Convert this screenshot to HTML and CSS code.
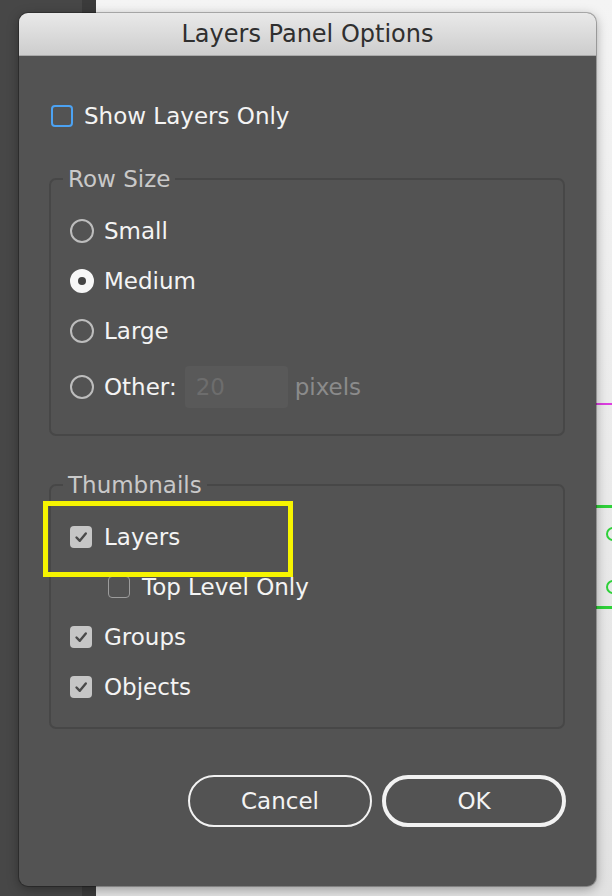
FILE: index.html
```html
<!DOCTYPE html>
<html>
<head>
<meta charset="utf-8">
<link rel="stylesheet" href="styles.css">
</head>
<body>
<div class="desktop">
  <div class="sidebar"></div>
  <div class="divider"></div>
  <div class="canvas">
    <span class="guide magenta g1"></span>
    <span class="guide green g2"></span>
    <span class="ring r1"></span>
    <span class="ring r2"></span>
    <span class="guide green g3"></span>
  </div>

  <div class="dialog">
    <div class="titlebar">Layers Panel Options</div>
    <div class="dialog-body">
      <div class="row top-option">
        <span class="checkbox focus"></span>
        <span class="label">Show Layers Only</span>
      </div>

      <fieldset class="group rowsize">
        <legend>Row Size</legend>
        <div class="row"><span class="radio"></span><span class="label">Small</span></div>
        <div class="row"><span class="radio selected"></span><span class="label">Medium</span></div>
        <div class="row"><span class="radio"></span><span class="label">Large</span></div>
        <div class="row other">
          <span class="radio"></span><span class="label">Other:</span>
          <span class="field">20</span>
          <span class="unit">pixels</span>
        </div>
      </fieldset>

      <fieldset class="group thumbs">
        <legend>Thumbnails</legend>
        <div class="row"><span class="checkbox checked"><svg viewBox="0 0 22 22"><path d="M6.5 11.5 L9.8 14.8 L15.8 7.5"/></svg></span><span class="label">Layers</span></div>
        <div class="row sub"><span class="checkbox plain"></span><span class="label">Top Level Only</span></div>
        <div class="row"><span class="checkbox checked"><svg viewBox="0 0 22 22"><path d="M6.5 11.5 L9.8 14.8 L15.8 7.5"/></svg></span><span class="label">Groups</span></div>
        <div class="row"><span class="checkbox checked"><svg viewBox="0 0 22 22"><path d="M6.5 11.5 L9.8 14.8 L15.8 7.5"/></svg></span><span class="label">Objects</span></div>
      </fieldset>

      <div class="buttons">
        <button class="btn">Cancel</button>
        <button class="btn default">OK</button>
      </div>
    </div>
    <div class="highlight"></div>
  </div>
</div>
</body>
</html>
```

FILE: styles.css
```css
* { box-sizing: border-box; }
html, body { margin: 0; padding: 0; }
body {
  width: 612px;
  height: 896px;
  overflow: hidden;
  font-family: "DejaVu Sans", "Liberation Sans", sans-serif;
}
.desktop {
  position: relative;
  display: flex;
  width: 612px;
  height: 896px;
}
.sidebar { width: 82px; background: #474747; }
.divider { width: 14px; background: #3b3b3b; }
.canvas {
  position: relative;
  flex: 1;
  background: linear-gradient(#f4f4f4, #e2e2e2);
}
.guide { position: absolute; left: 490px; width: 40px; }
.magenta { background: #dc3ee0; height: 2px; }
.green { background: #2fd13a; height: 3px; }
.g1 { top: 403px; }
.g2 { top: 505px; }
.g3 { top: 606px; }
.ring {
  position: absolute;
  left: 510px;
  width: 14px;
  height: 14px;
  border: 2px solid #2fd13a;
  border-radius: 50%;
}
.r1 { top: 527px; }
.r2 { top: 580px; }

.dialog {
  position: absolute;
  left: 19px;
  top: 13px;
  width: 577px;
  height: 873px;
  background: #535353;
  border-radius: 9px;
  box-shadow: 0 0 0 1px rgba(0,0,0,0.25), 0 3px 12px rgba(0,0,0,0.35);
  overflow: hidden;
}
.titlebar {
  height: 43px;
  line-height: 43px;
  text-align: center;
  font-size: 24px;
  color: #2f2f2f;
  background: linear-gradient(#e9e9e9, #cdcdcd);
  border-bottom: 1px solid #a9a9a9;
}
.dialog-body {
  padding: 0 31px 0 30px;
  color: #f4f4f4;
  font-size: 23px;
}
.row {
  display: flex;
  align-items: center;
  height: 50px;
}
.top-option {
  height: 30px;
  margin-top: 45px;
  padding-left: 2px;
}
.top-option .label { margin-left: 11px; }

.checkbox {
  display: inline-flex;
  width: 22px;
  height: 22px;
  border-radius: 4px;
  flex: none;
}
.checkbox.focus { border: 2px solid #4ca2f2; }
.checkbox.plain { border: 1.5px solid #9c9c9c; }
.checkbox.checked { background: #c6c6c6; }
.checkbox svg { width: 22px; height: 22px; }
.checkbox path {
  fill: none;
  stroke: #4a4a4a;
  stroke-width: 2.4;
  stroke-linecap: round;
  stroke-linejoin: round;
}

.group {
  margin: 34px 0 0;
  border: 2px solid #474747;
  border-radius: 7px;
  padding: 13px 0 22px 19px;
  min-width: 0;
}
.group legend {
  font-size: 23px;
  line-height: 28px;
  color: #c9c9c9;
  padding: 0 5px;
  margin-left: -7px;
}
.thumbs { margin-top: 35px; padding-bottom: 15px; }

.radio {
  width: 24px;
  height: 24px;
  border-radius: 50%;
  border: 2px solid #bdbdbd;
  flex: none;
  display: inline-flex;
  align-items: center;
  justify-content: center;
}
.radio.selected { background: #f7f7f7; border-color: #f7f7f7; }
.radio.selected::after {
  content: "";
  width: 8px;
  height: 8px;
  border-radius: 50%;
  background: #444;
}
.rowsize .label { margin-left: 10px; }
.thumbs .label { margin-left: 12px; }
.row.sub { padding-left: 38px; }
.row.other { margin-top: 6px; }
.field {
  width: 103px;
  height: 42px;
  margin-left: 8px;
  border-radius: 4px;
  background: #595959;
  color: #6d6d6d;
  padding-left: 11px;
  line-height: 42px;
}
.unit { margin-left: 7px; color: #8b8b8b; }

.buttons {
  display: flex;
  justify-content: flex-end;
  gap: 10px;
  margin-top: 46px;
  margin-right: -1px;
}
.btn {
  width: 184px;
  height: 52px;
  border-radius: 26px;
  border: 2px solid #f2f2f2;
  background: transparent;
  color: #f4f4f4;
  font-family: inherit;
  font-size: 23px;
  padding: 0;
}
.btn.default { border-width: 4px; }

.highlight {
  position: absolute;
  left: 24px;
  top: 488px;
  width: 250px;
  height: 76px;
  border: 5px solid #f6f400;
}
```
